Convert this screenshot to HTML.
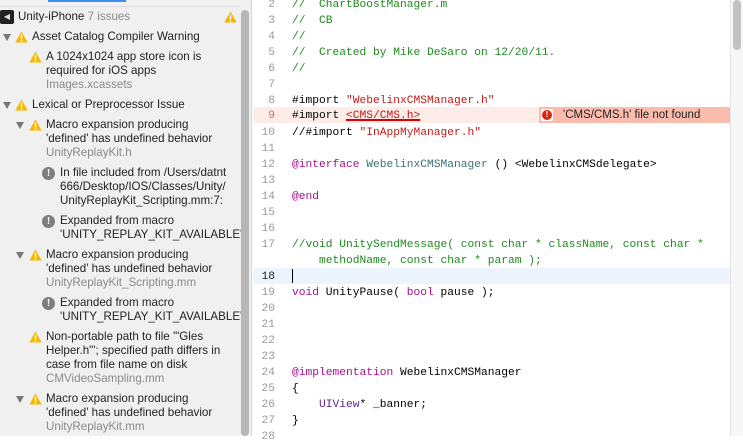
<!DOCTYPE html>
<html><head><meta charset="utf-8"><style>
*{margin:0;padding:0;box-sizing:border-box}
body{width:743px;height:436px;overflow:hidden;position:relative;background:#fff;font-family:"Liberation Sans",sans-serif}
#side{position:absolute;left:0;top:0;width:252px;height:436px;background:#f0f0f0;border-right:1px solid #d6d6d6;overflow:hidden}
.t{position:absolute;font-size:11.6px;color:#222;white-space:nowrap;line-height:14px}
.g{color:#8a8a8a}
.tri{position:absolute;width:0;height:0;border-left:4.5px solid transparent;border-right:4.5px solid transparent;border-top:7px solid #777}
.w{position:absolute;width:13px;height:12px}
.i{position:absolute;width:13px;height:13px;border-radius:50%;background:#7d7d7d;color:#fff;font-size:10px;font-weight:bold;text-align:center;line-height:13px}
#ed{position:absolute;left:253px;top:0;width:478px;height:436px;background:#fff;font-family:"Liberation Mono",monospace;font-size:11.25px}
.l{position:absolute;left:0;width:478px;height:16px;line-height:16px;white-space:pre}
.n{position:absolute;width:26px;text-align:right;color:#9a9a9a;left:-4px}
.c{position:absolute;left:39px;color:#000}
.cm{color:#1f8a1f}.st{color:#c41a16}.kw{color:#ab0d90}.cl{color:#3f6e74}.ty{color:#5c2699}
</style></head><body>
<div id="side">
<div style="position:absolute;left:0;top:6px;width:240px;border-top:1px solid #dcdcdc"></div>
<div style="position:absolute;left:48px;top:0;width:78px;height:2px;background:#3b8ef0"></div>
<div style="position:absolute;left:0;top:10px;width:14px;height:14px;background:#222;border-radius:2px;color:#ddd;font-size:8px;text-align:center;line-height:14px">◀</div>
<div class="t" style="left:18px;top:10px">Unity-iPhone <span class="g">7 issues</span></div>
<svg class="w" style="left:224px;top:11px" viewBox="0 0 13 12"><path d="M6.5 0.5L12.7 11.5H0.3Z" fill="#f5b800"/><rect x="5.8" y="3.5" width="1.4" height="4.8" fill="#fff"/><rect x="5.8" y="9.2" width="1.4" height="1.4" fill="#fff"/></svg>

<div class="tri" style="left:3px;top:34px"></div>
<svg class="w" style="left:15px;top:31px" viewBox="0 0 13 12"><path d="M6.5 0.5L12.7 11.5H0.3Z" fill="#f5b800"/><rect x="5.8" y="3.5" width="1.4" height="4.8" fill="#fff"/><rect x="5.8" y="9.2" width="1.4" height="1.4" fill="#fff"/></svg>
<div class="t" style="left:32px;top:30px">Asset Catalog Compiler Warning</div>

<svg class="w" style="left:29px;top:51px" viewBox="0 0 13 12"><path d="M6.5 0.5L12.7 11.5H0.3Z" fill="#f5b800"/><rect x="5.8" y="3.5" width="1.4" height="4.8" fill="#fff"/><rect x="5.8" y="9.2" width="1.4" height="1.4" fill="#fff"/></svg>
<div class="t" style="left:46px;top:50px">A 1024x1024 app store icon is<br>required for iOS apps<br><span class="g">Images.xcassets</span></div>

<div class="tri" style="left:3px;top:102px"></div>
<svg class="w" style="left:15px;top:99px" viewBox="0 0 13 12"><path d="M6.5 0.5L12.7 11.5H0.3Z" fill="#f5b800"/><rect x="5.8" y="3.5" width="1.4" height="4.8" fill="#fff"/><rect x="5.8" y="9.2" width="1.4" height="1.4" fill="#fff"/></svg>
<div class="t" style="left:32px;top:98px">Lexical or Preprocessor Issue</div>

<div class="tri" style="left:16px;top:122px"></div>
<svg class="w" style="left:29px;top:119px" viewBox="0 0 13 12"><path d="M6.5 0.5L12.7 11.5H0.3Z" fill="#f5b800"/><rect x="5.8" y="3.5" width="1.4" height="4.8" fill="#fff"/><rect x="5.8" y="9.2" width="1.4" height="1.4" fill="#fff"/></svg>
<div class="t" style="left:46px;top:118px">Macro expansion producing<br>'defined' has undefined behavior<br><span class="g">UnityReplayKit.h</span></div>

<div class="i" style="left:42px;top:167px">!</div>
<div class="t" style="left:60px;top:166px">In file included from /Users/datnt<br>666/Desktop/IOS/Classes/Unity/<br>UnityReplayKit_Scripting.mm:7:</div>

<div class="i" style="left:42px;top:215px">!</div>
<div class="t" style="left:60px;top:214px">Expanded from macro<br>'UNITY_REPLAY_KIT_AVAILABLE'</div>

<div class="tri" style="left:16px;top:252px"></div>
<svg class="w" style="left:29px;top:249px" viewBox="0 0 13 12"><path d="M6.5 0.5L12.7 11.5H0.3Z" fill="#f5b800"/><rect x="5.8" y="3.5" width="1.4" height="4.8" fill="#fff"/><rect x="5.8" y="9.2" width="1.4" height="1.4" fill="#fff"/></svg>
<div class="t" style="left:46px;top:248px">Macro expansion producing<br>'defined' has undefined behavior<br><span class="g">UnityReplayKit_Scripting.mm</span></div>

<div class="i" style="left:42px;top:297px">!</div>
<div class="t" style="left:60px;top:296px">Expanded from macro<br>'UNITY_REPLAY_KIT_AVAILABLE'</div>

<svg class="w" style="left:29px;top:331px" viewBox="0 0 13 12"><path d="M6.5 0.5L12.7 11.5H0.3Z" fill="#f5b800"/><rect x="5.8" y="3.5" width="1.4" height="4.8" fill="#fff"/><rect x="5.8" y="9.2" width="1.4" height="1.4" fill="#fff"/></svg>
<div class="t" style="left:46px;top:330px">Non-portable path to file '"Gles<br>Helper.h"'; specified path differs in<br>case from file name on disk<br><span class="g">CMVideoSampling.mm</span></div>

<div class="tri" style="left:16px;top:396px"></div>
<svg class="w" style="left:29px;top:393px" viewBox="0 0 13 12"><path d="M6.5 0.5L12.7 11.5H0.3Z" fill="#f5b800"/><rect x="5.8" y="3.5" width="1.4" height="4.8" fill="#fff"/><rect x="5.8" y="9.2" width="1.4" height="1.4" fill="#fff"/></svg>
<div class="t" style="left:46px;top:392px">Macro expansion producing<br>'defined' has undefined behavior<br><span class="g">UnityReplayKit.mm</span></div>
<div style="position:absolute;left:241px;top:10px;width:8px;height:426px;background:#b7b7b7;border-radius:4px"></div>
</div>

<div id="ed">
<div class="l" style="top:-3px"><span class="n">2</span><span class="c cm">//  ChartBoostManager.m</span></div>
<div class="l" style="top:13px"><span class="n">3</span><span class="c cm">//  CB</span></div>
<div class="l" style="top:29px"><span class="n">4</span><span class="c cm">//</span></div>
<div class="l" style="top:45px"><span class="n">5</span><span class="c cm">//  Created by Mike DeSaro on 12/20/11.</span></div>
<div class="l" style="top:61px"><span class="n">6</span><span class="c cm">//</span></div>
<div class="l" style="top:77px"><span class="n">7</span></div>
<div class="l" style="top:93px"><span class="n">8</span><span class="c">#import <span class="st">"WebelinxCMSManager.h"</span></span></div>
<div class="l" style="top:107px;height:16px;background:#fdece7"><span class="n" style="color:#c07070;top:1px">9</span><span class="c" style="top:1px">#import <span class="st" style="text-decoration:underline;text-decoration-color:#d00;text-decoration-thickness:2px">&lt;CMS/CMS.h&gt;</span></span>
<div style="position:absolute;left:286px;top:0;width:192px;height:16px;background:#fbbcae;font-family:'Liberation Sans',sans-serif;font-size:11.5px;color:#222;line-height:16px"><span style="position:absolute;left:2px;top:2px;width:12px;height:12px;background:#fff;border-radius:2px"></span><span style="position:absolute;left:3px;top:3px;width:10px;height:10px;border-radius:50%;background:#d21;color:#fff;font-size:8px;font-weight:bold;text-align:center;line-height:10px">!</span><span style="position:absolute;left:24px">'CMS/CMS.h' file not found</span></div></div>
<div class="l" style="top:125px"><span class="n">10</span><span class="c">//#import <span class="st">"InAppMyManager.h"</span></span></div>
<div class="l" style="top:141px"><span class="n">11</span></div>
<div class="l" style="top:157px"><span class="n">12</span><span class="c"><span class="kw">@interface</span> <span class="cl">WebelinxCMSManager</span> () &lt;WebelinxCMSdelegate&gt;</span></div>
<div class="l" style="top:173px"><span class="n">13</span></div>
<div class="l" style="top:189px"><span class="n">14</span><span class="c kw">@end</span></div>
<div class="l" style="top:205px"><span class="n">15</span></div>
<div class="l" style="top:221px"><span class="n">16</span></div>
<div class="l" style="top:237px"><span class="n">17</span><span class="c cm">//void UnitySendMessage( const char * className, const char *</span></div>
<div class="l" style="top:253px"><span class="c cm">    methodName, const char * param );</span></div>
<div class="l" style="top:268px;background:#ecf4fe"><span class="n" style="color:#222;top:1px">18</span><span style="position:absolute;left:39px;top:1px;width:1px;height:14px;background:#000"></span></div>
<div class="l" style="top:285px"><span class="n">19</span><span class="c"><span class="kw">void</span> UnityPause( <span class="kw">bool</span> pause );</span></div>
<div class="l" style="top:301px"><span class="n">20</span></div>
<div class="l" style="top:317px"><span class="n">21</span></div>
<div class="l" style="top:333px"><span class="n">22</span></div>
<div class="l" style="top:349px"><span class="n">23</span></div>
<div class="l" style="top:365px"><span class="n">24</span><span class="c"><span class="kw">@implementation</span> WebelinxCMSManager</span></div>
<div class="l" style="top:381px"><span class="n">25</span><span class="c">{</span></div>
<div class="l" style="top:397px"><span class="n">26</span><span class="c">    <span class="ty">UIView</span>* _banner;</span></div>
<div class="l" style="top:413px"><span class="n">27</span><span class="c">}</span></div>
<div class="l" style="top:429px"><span class="n">28</span></div>
</div>
<div style="position:absolute;left:730px;top:0;width:13px;height:436px;background:#f7f7f7;border-left:1px solid #e4e4e4"></div>
<div style="position:absolute;left:733px;top:0;width:8px;height:50px;background:#c2c2c2;border-radius:4px"></div>
</body></html>
